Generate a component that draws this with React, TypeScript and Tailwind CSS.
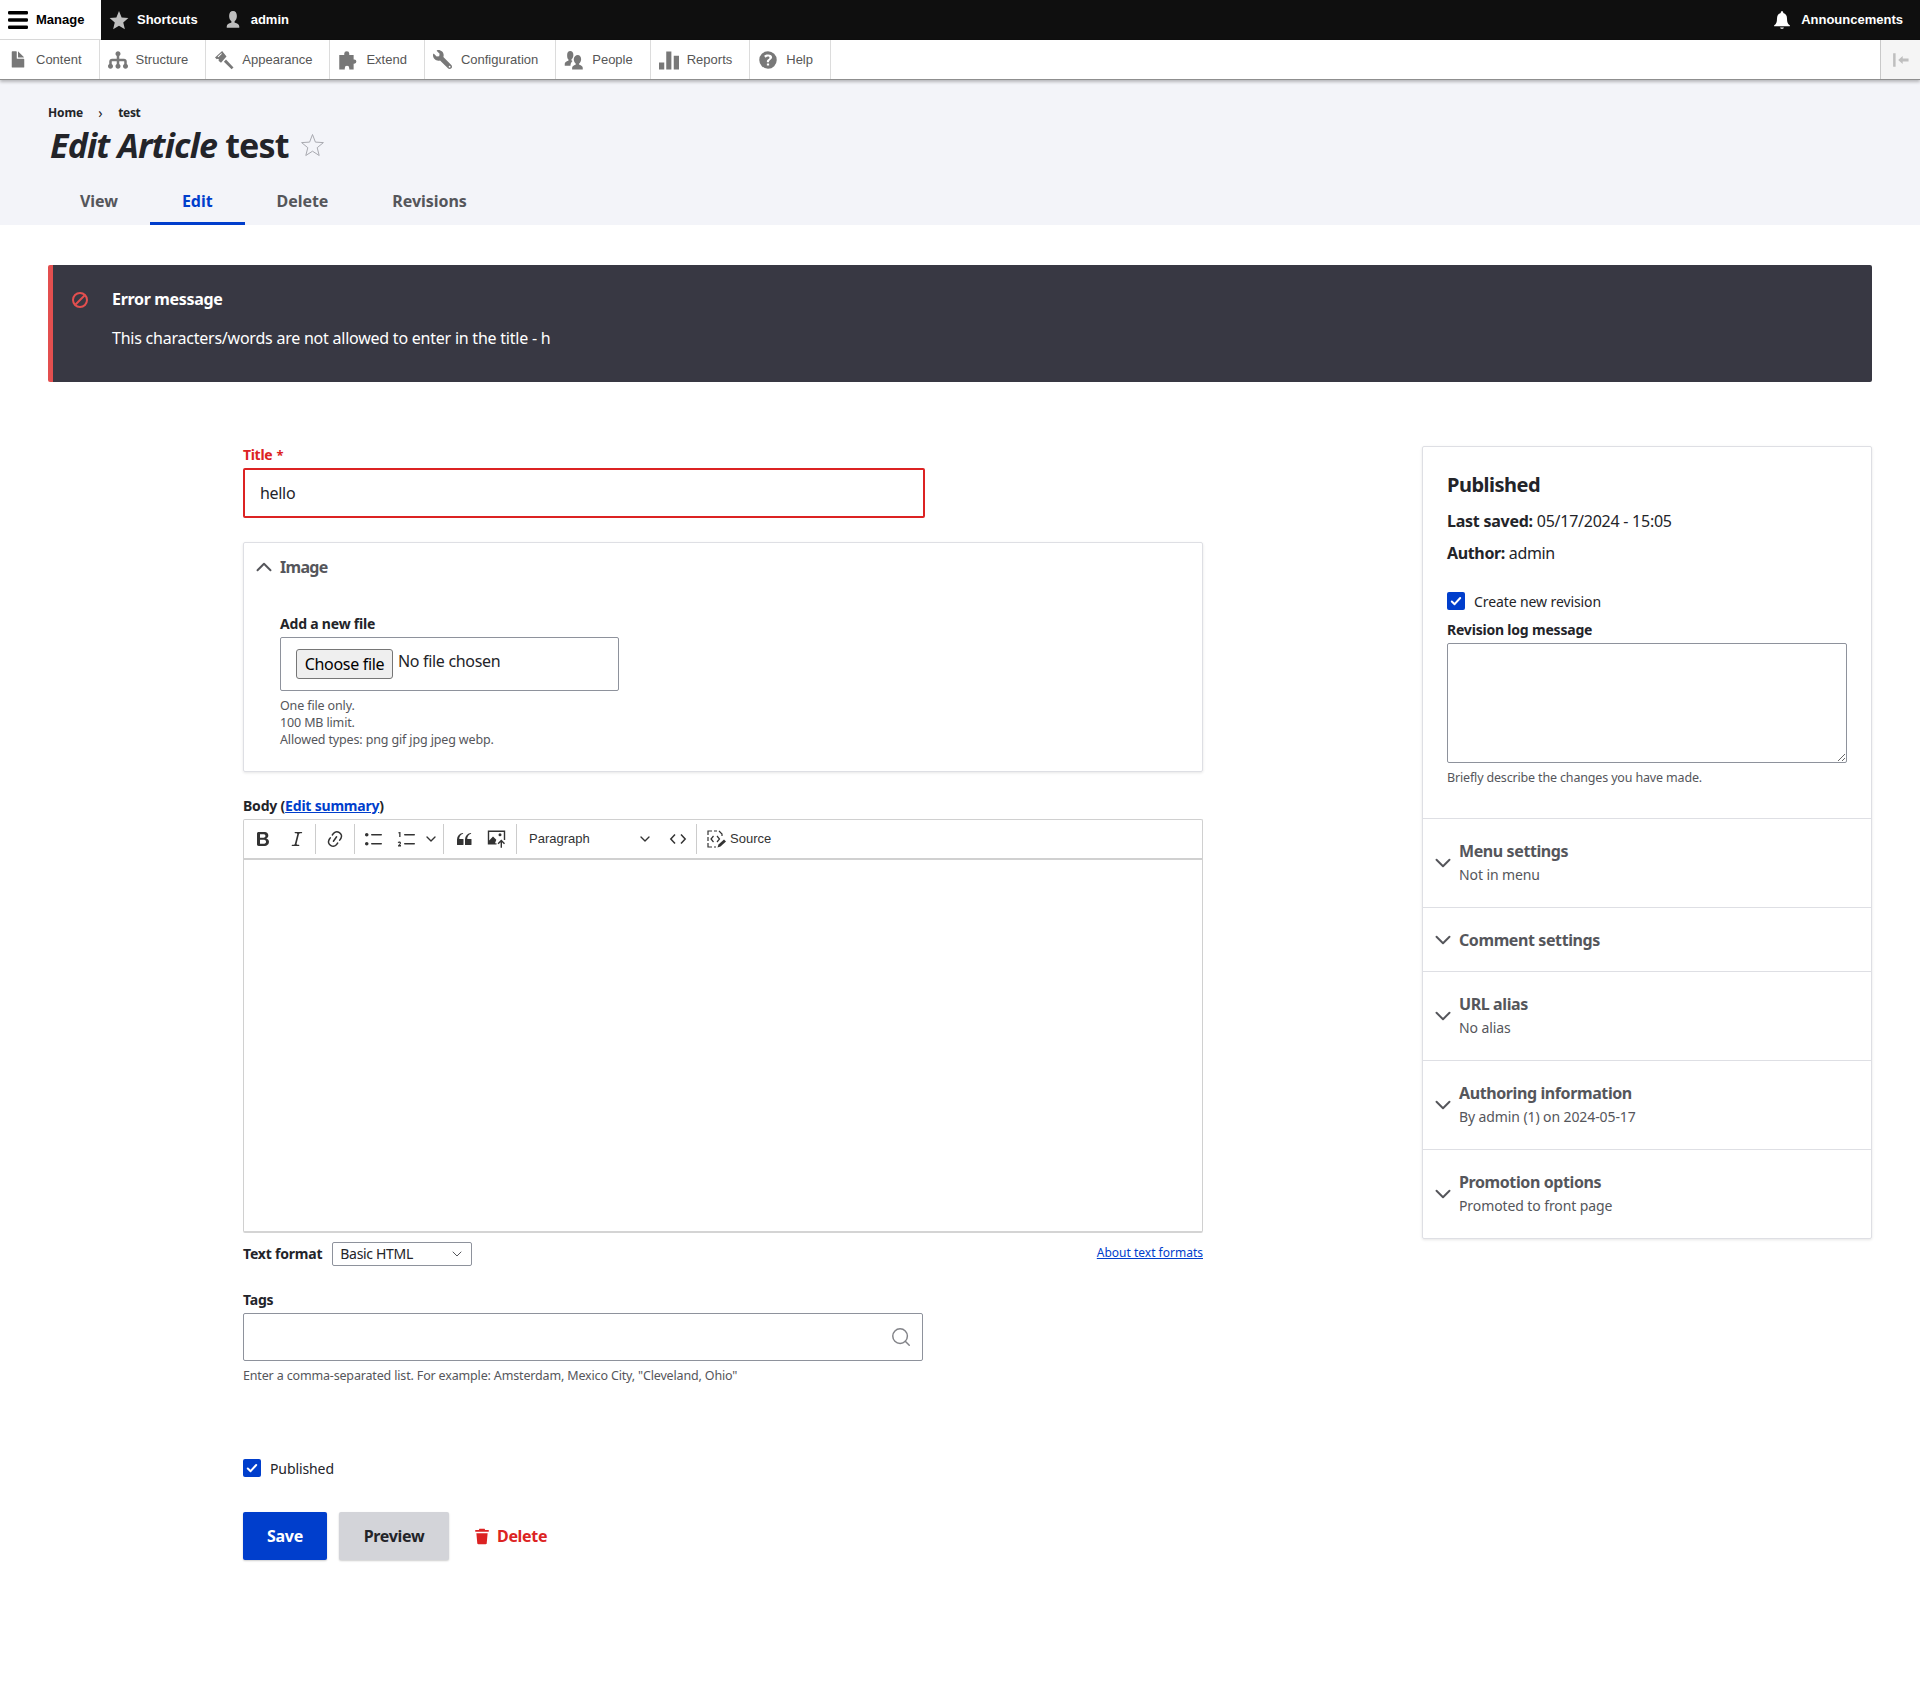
import type { ReactNode } from "react";
import { ChevronDown, ChevronUp, Search } from "lucide-react";
import { FaWrench } from "react-icons/fa";

const ICON = "#787878";

function Glyph({ d, fill = ICON, size = 20, box = "0 0 16 16" }: { d: string; fill?: string; size?: number; box?: string }) {
  return (
    <svg width={size} height={size} viewBox={box} fill={fill} fillRule="evenodd">
      <path d={d} />
    </svg>
  );
}

const paths = {
  menu: "M1 .8h14a1 1 0 0 1 1 1v.8a1 1 0 0 1-1 1H1a1 1 0 0 1-1-1v-.8a1 1 0 0 1 1-1zM1 6.600h14a1 1 0 0 1 1 1v.8a1 1 0 0 1-1 1H1a1 1 0 0 1-1-1v-.8a1 1 0 0 1 1-1zM1 12.400h14a1 1 0 0 1 1 1v.8a1 1 0 0 1-1 1H1a1 1 0 0 1-1-1v-.8a1 1 0 0 1 1-1z",
  star: "M8 .8l2.100 5.200 5.400.4-4.100 3.600 1.300 5.400L8 12.500l-4.700 2.900 1.300-5.400L.5 6.400 5.900 6z",
  user: "M8 .8c2 0 3.100 1.600 3.100 3.900 0 1.900-.8 3.400-1.700 4.200-.4.4-.3 1 .2 1.200 1.700.6 3.400 1.300 3.400 2.900v1.200H3v-1.200c0-1.600 1.700-2.300 3.400-2.900.5-.2.6-.8.2-1.200-.9-.8-1.700-2.300-1.700-4.200C4.900 2.400 6 .8 8 .8z",
  bell: "M8 1c.6 0 1 .4 1 1v.4c2 .5 3 2.100 3 4.300 0 2.900.6 4.200 2.200 5.500.3.3.1.8-.3.8H2.100c-.4 0-.6-.5-.3-.8C3.400 10.900 4 9.600 4 6.700c0-2.200 1-3.800 3-4.300V2c0-.6.4-1 1-1zM6.500 14h3c0 .6-.7 1-1.500 1s-1.500-.4-1.500-1z",
  file: "M12.502 7h-5c-.276 0-.502-.225-.502-.5v-5c0-.275-.225-.5-.5-.5h-3c-.275 0-.5.225-.5.5v12.029c0 .275.225.5.5.5h9.002c.275 0 .5-.225.5-.5v-6.029c0-.275-.225-.5-.5-.5zM8.502 6h4c.275 0 .34-.159.146-.354l-4.293-4.292c-.195-.195-.353-.129-.353.146v4c0 .275.225.5.5.5z",
  tree: "M15.002 11.277c0-.721 0-1.471 0-2.014 0-1.456-.824-2.250-2.250-2.250-1.428 0-3.500 0-3.500 0-.139 0-.25-.112-.25-.25v-2.040c.596-.346 1-.984 1-1.723 0-1.104-.895-2-2-2C6.896 1 6 1.896 6 3c0 .738.405 1.376 1 1.722v2.042c0 .138-.112.25-.25.25 0 0-2.138 0-3.500 0S1 7.932 1 9.266c0 .521 0 1.277 0 2.012-.595.353-1 .984-1 1.729 0 1.104.896 2 2 2s2-.896 2-2c0-.732-.405-1.377-1-1.729V9.266c0-.139.112-.25.25-.25h3.500c.138 0 .25.111.25.25v2.012c-.595.353-1 .984-1 1.729 0 1.104.896 2 2 2s2-.896 2-2c0-.732-.405-1.377-1-1.729V9.266c0-.139.112-.25.25-.25h3.500c.139 0 .25.111.25.25v2.012c-.596.353-1 .984-1 1.729 0 1.104.896 2 2 2s2-.896 2-2c0-.745-.404-1.384-1-1.730z",
  paint: "M6.500.8L.8 6l1.400 1.400 1-.5.8.9-.4.8 2 1.600L10 5.200zM6.400 3L3.500 5.700 2.900 5.200 5.800 2.500zM9.600 7.600l6 6.300-1.500 1.500-6.200-6.100z",
  puzzle: "M1 4h4V2.800a2 1.800 0 1 1 4 0V4h3.500v3.500h.5a1.700 1.700 0 1 1 0 3.400h-.5V15.500H9v-1a1.800 1.800 0 1 0-3.600 0v1H1z",
  people: "M5 .8c1.500 0 2.500 1.300 2.500 3.100 0 1.500-.6 2.700-1.400 3.400-.3.300-.3.700 0 1 .3.200.5.400.7.500C5.800 9.800 5.200 11 5.200 12.500H.6V11c0-1.300 1.300-1.900 2.700-2.400.4-.2.500-.7.200-1C2.700 6.800 2.500 5.600 2.500 3.900 2.500 2.100 3.500.8 5 .8zM11 4c1.600 0 2.700 1.400 2.700 3.300 0 1.500-.7 2.800-1.500 3.500-.3.300-.2.800.2 1 1.300.5 2.600 1.100 2.600 2.400V15.500H6.500V14.200c0-1.300 1.300-1.900 2.600-2.400.4-.2.500-.7.200-1-.8-.7-1.500-2-1.500-3.500C7.800 5.400 9.400 4 11 4z",
  bars: "M0 10h4.200v5.500H0zM5.800 1.200h4.100v14.300H5.800zM11.800 4.500H16v11h-4.200z",
  help: "M8 1a7 7 0 1 0 0 14A7 7 0 0 0 8 1zm.900 11.400H7.100v-1.700h1.800zM10.800 7c-.3.500-.9.900-1.300 1.200-.5.300-.7.700-.7 1.100v.4H7.100V9c0-.8.400-1.300 1-1.700.6-.4 1.100-.7 1.100-1.200s-.5-.9-1.200-.9c-.6 0-1.300.3-1.900.9l-1-1.200C4.900 4 6.100 3.500 8.200 3.500c1.900 0 3.100 1 3.100 2.300 0 .5-.2.900-.5 1.200z",
  collapse: "M1 2h2.200v12H1zM5.500 8l4-3.500v2.200h5.200v2.600H9.500v2.200z",
  trash: "M5.700 1.500h4.600l.5 1.100H14v1.700H2V2.600h3.200zM3 5.500h10l-.8 9c0 .5-.4.8-.9.8H4.700c-.5 0-.9-.3-.9-.8z",
};

const ck = {
  bold: "M10.187 17H5.773c-.637 0-1.092-.138-1.364-.415-.273-.277-.409-.718-.409-1.323V4.738c0-.617.14-1.062.419-1.332.279-.27.73-.406 1.354-.406h4.680c.69 0 1.288.041 1.793.124.506.083.96.242 1.360.478.341.197.644.447.906.75a3.262 3.262 0 0 1 .808 2.162c0 1.401-.722 2.426-2.167 3.075C15.050 10.175 16 11.315 16 13.010a3.756 3.756 0 0 1-2.296 3.504 6.100 6.100 0 0 1-1.517.377c-.571.073-1.238.11-2 .11zm-.217-6.217H7v4.087h3.069c1.977 0 2.965-.69 2.965-2.072 0-.707-.256-1.220-.768-1.537-.512-.319-1.277-.478-2.296-.478zM7 5.130v3.619h2.606c.729 0 1.292-.067 1.690-.2a1.600 1.600 0 0 0 .91-.765c.165-.267.247-.566.247-.897 0-.707-.26-1.176-.778-1.409-.519-.232-1.310-.348-2.375-.348H7z",
  italic: "m9.586 14.633.021.004c-.036.335.095.655.393.962.082.083.173.15.274.201h1.474a.6.6 0 1 1 0 1.200H5.304a.6.6 0 0 1 0-1.200h1.150c.474-.07.809-.182 1.005-.334.157-.122.291-.32.404-.597l2.416-9.550a1.053 1.053 0 0 0-.281-.823 1.120 1.120 0 0 0-.442-.296H8.150a.6.6 0 0 1 0-1.200h6.443a.6.6 0 1 1 0 1.200h-1.195c-.376.056-.65.155-.823.296-.215.175-.423.439-.623.79l-2.366 9.347z",
  link: "m11.077 15 .991-1.416a.75.75 0 1 1 1.229.86l-1.148 1.640a.748.748 0 0 1-.217.206 5.251 5.251 0 0 1-8.503-5.955.741.741 0 0 1 .12-.274l1.147-1.639a.75.75 0 1 1 1.228.86L4.933 10.700l.006.003a3.750 3.750 0 0 0 6.132 4.294l.006.004zm5.494-5.335a.748.748 0 0 1-.12.274l-1.147 1.639a.75.75 0 1 1-1.228-.86l.86-1.230a3.750 3.750 0 0 0-6.144-4.301l-.86 1.229a.75.75 0 0 1-1.229-.86l1.148-1.640a.748.748 0 0 1 .217-.206 5.251 5.251 0 0 1 8.503 5.955zm-4.563-2.532a.75.75 0 0 1 .184 1.045l-3.155 4.505a.75.75 0 1 1-1.229-.86l3.155-4.506a.75.75 0 0 1 1.045-.184z",
  bullets: "M7 5.750c0 .414.336.75.75.75h9.500a.75.75 0 1 0 0-1.500h-9.500a.75.75 0 0 0-.75.750zm-6 0C1 4.784 1.777 4 2.750 4c.966 0 1.750.777 1.750 1.750 0 .966-.777 1.750-1.750 1.750C1.784 7.500 1 6.723 1 5.750zm6 9c0 .414.336.75.75.75h9.500a.75.75 0 1 0 0-1.500h-9.500a.75.75 0 0 0-.75.750zm-6 0c0-.966.777-1.750 1.750-1.750.966 0 1.750.777 1.750 1.750 0 .966-.777 1.750-1.750 1.750-.966 0-1.750-.777-1.750-1.750z",
  numbers: "M7 5.750c0 .414.336.75.75.75h9.500a.75.75 0 1 0 0-1.500h-9.500a.75.75 0 0 0-.75.750zM3.500 3v5H2.200V4.300H1.200V3.400C2 3.300 2.300 3.200 2.600 3zM4 17.500H1v-1c1-1 1.800-1.600 1.800-2.200 0-.3-.2-.5-.6-.5-.3 0-.6.1-.9.4L.7 13c.5-.4 1-.6 1.700-.6 1 0 1.600.6 1.600 1.500 0 .8-.7 1.500-1.400 2.200H4zM7 14.750c0 .414.336.75.75.75h9.500a.75.75 0 1 0 0-1.500h-9.500a.75.75 0 0 0-.75.750z",
  quote: "M3 10.423a6.500 6.500 0 0 1 6.056-6.408l.038.67C6.448 5.423 5.354 7.663 5.220 10H9c.552 0 .5.432.5.986v4.511c0 .554-.448.503-1 .503h-5c-.552 0-.5-.449-.5-1.003v-4.574zm8 0a6.500 6.500 0 0 1 6.056-6.408l.038.67c-2.646.739-3.740 2.979-3.873 5.315H17c.552 0 .5.432.5.986v4.511c0 .554-.448.503-1 .503h-5c-.552 0-.5-.449-.5-1.003v-4.574z",
  image: "M.8 1.500h17.400v9.500h-1.400V2.900H2.200v11.300h7.300v1.400H.8zM13 4.300a1.500 1.500 0 1 1 0 3 1.500 1.500 0 0 1 0-3zM2.200 14.200v-2.700l3.800-4 3.300 3.200-1.300 3.500zM15 18.800h-1.400v-5.600l-2 2-1-1 3.700-3.700 3.700 3.700-1 1-2-2z",
};

function CkIcon({ d }: { d: string }) {
  return <Glyph d={d} fill="#333" size={20} box="0 0 20 20" />;
}

function TopItem({ icon, label, active, color = "#bebebe" }: { icon: string; label: string; active?: boolean; color?: string }) {
  return (
    <div className={active ? "box-border flex h-10 w-[101px] items-center border-b border-[#d8d8d8] bg-white pl-2 text-black" : "flex h-10 items-center pl-2 pr-[17px] text-white"}>
      <Glyph d={icon} fill={color} />
      <span className="ml-2 text-[13px] font-bold">{label}</span>
    </div>
  );
}

const adminMenu = [
  { label: "Content", icon: <Glyph d={paths.file} /> },
  { label: "Structure", icon: <Glyph d={paths.tree} /> },
  { label: "Appearance", icon: <Glyph d={paths.paint} /> },
  { label: "Extend", icon: <Glyph d={paths.puzzle} /> },
  {
    label: "Configuration",
    icon: (
      <span className="flex h-5 w-5 items-center justify-center">
        <FaWrench className="-scale-x-100" size={19} color={ICON} />
      </span>
    ),
  },
  { label: "People", icon: <Glyph d={paths.people} /> },
  { label: "Reports", icon: <Glyph d={paths.bars} /> },
  { label: "Help", icon: <Glyph d={paths.help} /> },
];

function Toolbar() {
  return (
    <div className="relative z-10 tracking-normal" style={{ fontFamily: '"Liberation Sans", Arial, sans-serif' }}>
      <div className="flex h-10 items-start bg-[#0f0f0f]">
        <TopItem icon={paths.menu} label="Manage" active color="#000" />
        <TopItem icon={paths.star} label="Shortcuts" />
        <TopItem icon={paths.user} label="admin" />
        <div className="ml-auto flex h-10 items-center pr-[17px] text-white">
          <Glyph d={paths.bell} fill="#fff" />
          <span className="ml-[9px] text-[13px] font-bold">Announcements</span>
        </div>
      </div>
      <div className="flex h-[40px] border-b border-[#8f8f8f] bg-white shadow-[0_2px_3px_rgba(0,0,0,0.25)]">
        {adminMenu.map((item) => (
          <div key={item.label} className="flex items-center border-r border-[#dcdcdc] pl-2 pr-[17px]">
            {item.icon}
            <span className="ml-2 text-[13px] text-[#565656]">{item.label}</span>
          </div>
        ))}
        <div className="ml-auto flex w-10 items-center justify-center border-l border-[#c9c9c9] bg-[#f5f5f5]">
          <Glyph d={paths.collapse} fill="#bfbfbf" size={18} />
        </div>
      </div>
    </div>
  );
}

const tabs = ["View", "Edit", "Delete", "Revisions"];

function PageHeader() {
  return (
    <div className="bg-[#f3f4f9] pl-12 pt-[25px]">
      <div className="flex h-4 items-center text-[12px] font-bold leading-4 text-[#232429]">
        <span className="tracking-[-0.1px]">Home</span>
        <span className="ml-[15px] text-[14px] font-normal">›</span>
        <span className="ml-[16px]">test</span>
      </div>
      <div className="mt-1 flex h-10 items-center pl-0.5">
        <h1 className="text-[34px] font-bold leading-10 tracking-[-0.82px] text-[#232429]">
          <em>Edit Article</em> test
        </h1>
        <svg className="ml-3" width="23" height="24" viewBox="0 0 23 24" fill="none" stroke="#a8a9b0" strokeWidth="1">
          <path d="M11.500 1.500l2.900 7.600 8 .5-6.200 5.100 2 7.800-6.700-4.300-6.700 4.300 2-7.800L.6 9.600l8-.5z" />
        </svg>
      </div>
      <div className="mt-[13px] flex">
        {tabs.map((t) => (
          <div
            key={t}
            className={
              t === "Edit"
                ? "flex h-[47px] items-center border-b-[3px] border-[#003ecc] px-8 pt-px text-[16px] font-bold tracking-[-0.05px] text-[#003ecc]"
                : "flex h-[47px] items-center border-b-[3px] border-transparent px-8 pt-px text-[16px] font-bold tracking-[-0.05px] text-[#55565b]"
            }
          >
            {t}
          </div>
        ))}
      </div>
    </div>
  );
}

function ErrorMessage() {
  return (
    <div className="mt-10 flex h-[117px] rounded-[2px] border-l-[5px] border-[#e34f4f] bg-[#383843] pl-[18px] pt-[24px] text-white">
      <svg className="mt-[2px]" width="18" height="18" viewBox="0 0 18 18" fill="none" stroke="#e34f4f" strokeWidth="2">
        <circle cx="9" cy="9" r="7" />
        <path d="M4.500 13.500l9-9" />
      </svg>
      <div className="ml-[23px]">
        <div className="h-[20px] text-[16px] font-bold leading-5">Error message</div>
        <div className="mt-[19px] text-[16px] leading-5 tracking-[-0.23px]">This characters/words are not allowed to enter in the title - h</div>
      </div>
    </div>
  );
}

function CheckRow({ label, className = "" }: { label: string; className?: string }) {
  return (
    <div className={`flex h-[18px] items-center ${className}`}>
      <span className="flex h-[18px] w-[18px] items-center justify-center rounded-[2px] bg-[#003ecc]">
        <svg width="12" height="12" viewBox="0 0 12 12" fill="none" stroke="#fff" strokeWidth="2" strokeLinecap="round" strokeLinejoin="round">
          <path d="M1.800 6.500l2.800 2.700 5.600-6.200" />
        </svg>
      </span>
      <span className="ml-[9px] mt-px text-[14px] leading-[18px] tracking-[-0.1px] text-[#232429]">{label}</span>
    </div>
  );
}

function Label({ children, className = "" }: { children: ReactNode; className?: string }) {
  return <div className={`h-[18px] text-[14px] font-bold leading-[18px] tracking-[-0.2px] text-[#232429] ${className}`}>{children}</div>;
}

function Sep() {
  return <span className="h-[30px] w-px shrink-0 bg-[#ccc]" />;
}

// widths are picked so each button centres where CKEditor puts it
function EditorBar() {
  return (
    <div className="flex h-[40px] items-center border-b-2 border-[#d0d0d0] pl-px text-[13px] tracking-normal text-[#333]" style={{ fontFamily: '"Liberation Sans", Arial, sans-serif' }}>
      <span className="flex w-[36px] justify-center"><CkIcon d={ck.bold} /></span>
      <span className="flex w-[32px] justify-center"><CkIcon d={ck.italic} /></span>
      <span className="w-[2px]" />
      <Sep />
      <span className="flex w-[38px] justify-center"><CkIcon d={ck.link} /></span>
      <Sep />
      <span className="flex w-[37px] justify-center"><CkIcon d={ck.bullets} /></span>
      <span className="ml-[5px] flex w-[20px] justify-center"><CkIcon d={ck.numbers} /></span>
      <span className="ml-[6px] flex w-[16px] justify-center"><ChevronDown size={16} strokeWidth={2} /></span>
      <span className="w-[4px]" />
      <Sep />
      <span className="flex w-[39px] justify-center"><CkIcon d={ck.quote} /></span>
      <span className="flex w-[28px] justify-center"><CkIcon d={ck.image} /></span>
      <span className="w-[5px]" />
      <Sep />
      <span className="ml-[12px] w-[108px]">Paragraph</span>
      <ChevronDown size={16} strokeWidth={2} />
      <span className="ml-[7px] flex w-[36px] justify-center">
        <svg width="20" height="20" viewBox="0 0 20 20" fill="none" stroke="#333" strokeWidth="1.500">
          <path d="M7 5.500L2.800 10 7 14.500M13 5.500l4.200 4.500-4.200 4.500" />
        </svg>
      </span>
      <Sep />
      <svg className="ml-[9px]" width="20" height="20" viewBox="0 0 20 20" fill="none" stroke="#333" strokeWidth="1.200">
        <path d="M2 6V2h4M8 2h3M13 2l3 3v2M2 8v4M2 14v4h4M8 18h2" />
        <path d="M7.500 7L5 10l2.500 3M11 7l2.500 3L11 13" />
        <path d="M11.500 18.500l1-3 5.500-5 2 2-5.500 5z" fill="#333" stroke="none" />
      </svg>
      <span className="ml-[4px]">Source</span>
    </div>
  );
}

function Form() {
  return (
    <div className="ml-[195px] w-[960px]">
      <div className="h-[18px] text-[14px] font-bold leading-[18px] text-[#dc2323]">
        Title <span className="ml-px text-[13px]">*</span>
      </div>
      <input
        readOnly
        value="hello"
        className="mt-1 block h-[50px] w-[682px] rounded-[2px] border-2 border-[#dc2323] px-[15px] text-[16px] text-[#232429] outline-none"
      />

      <div className="mt-6 h-[230px] rounded-[2px] border border-[#dedfe4] shadow-[0_1px_3px_rgba(0,0,0,0.1)]">
        <div className="flex h-[47px] items-center pl-[7px] text-[#55565b]">
          <ChevronUp size={26} strokeWidth={1.800} />
          <span className="ml-[3px] text-[16px] font-bold tracking-[-0.7px]">Image</span>
        </div>
        <div className="mt-[25px] pl-9">
          <Label>Add a new file</Label>
          <div className="mt-1 flex h-[54px] w-[339px] items-start rounded-[2px] border border-[#8e929c] pl-[15px] pt-[11px] text-[16px] text-[#232429]">
            <button className="h-[30px] w-[97px] rounded-[3px] border border-[#767676] bg-[#efefef] text-black">Choose file</button>
            <span className="ml-[5px] leading-6">No file chosen</span>
          </div>
          <div className="mt-[6px] text-[12.500px] leading-[17px] tracking-[-0.14px] text-[#55565b]">
            <div>One file only.</div>
            <div>100 MB limit.</div>
            <div>Allowed types: png gif jpg jpeg webp.</div>
          </div>
        </div>
      </div>

      <Label className="mt-[25px]">
        Body (<span className="text-[#003ecc] underline">Edit summary</span>)
      </Label>
      <div className="mt-1 h-[414px] rounded-[2px] border border-[#d0d0d0] border-b-2 border-b-[#d4d4d4]">
        <EditorBar />
      </div>

      <div className="mt-[9px] flex h-6 items-center">
        <Label>Text format</Label>
        <div className="relative ml-[10px] flex h-6 w-[140px] items-center rounded-[2px] border border-[#8e929c] pb-[2px] pl-[7px] text-[14px] text-[#232429]">
          Basic HTML
          <ChevronDown className="absolute right-[6px] top-[3px]" size={16} strokeWidth={1.500} color="#55565b" />
        </div>
        <span className="-mt-[3px] ml-auto text-[12px] tracking-normal text-[#003ecc] underline">About text formats</span>
      </div>

      <Label className="mt-[25px]">Tags</Label>
      <div className="mt-1 flex h-[48px] w-[680px] items-center justify-end rounded-[2px] border border-[#8e929c] pr-[10px]">
        <Search size={22} strokeWidth={1.600} color="#828388" />
      </div>
      <div className="mt-[7px] h-4 text-[12.500px] leading-4 tracking-[-0.16px] text-[#55565b]">
        Enter a comma-separated list. For example: Amsterdam, Mexico City, "Cleveland, Ohio"
      </div>

      <CheckRow label="Published" className="mt-[75px]" />

      <div className="mt-[35px] flex items-center">
        <button className="h-12 w-[84px] rounded-[2px] bg-[#003ecc] text-[16px] font-bold text-white shadow-[0_1px_2px_rgba(0,0,0,0.2)]">Save</button>
        <button className="ml-3 h-12 w-[110px] rounded-[2px] bg-[#d3d4d9] text-[16px] font-bold text-[#232429] shadow-[0_1px_2px_rgba(0,0,0,0.2)]">Preview</button>
        <span className="ml-6 flex items-center text-[16px] font-bold text-[#dc2323]">
          <Glyph d={paths.trash} fill="#dc2323" size={18} />
          <span className="ml-[6px]">Delete</span>
        </span>
      </div>
    </div>
  );
}

const sections = [
  { title: "Menu settings", sub: "Not in menu", h: "h-[89px]" },
  { title: "Comment settings", sub: "", h: "h-[64px]" },
  { title: "URL alias", sub: "No alias", h: "h-[89px]" },
  { title: "Authoring information", sub: "By admin (1) on 2024-05-17", h: "h-[89px]" },
  { title: "Promotion options", sub: "Promoted to front page", h: "h-[89px]" },
];

function Sidebar() {
  return (
    <div className="ml-auto h-[793px] w-[450px] rounded-[2px] border border-[#dedfe4] shadow-[0_1px_3px_rgba(0,0,0,0.1)]">
      <div className="h-[371px] px-6 pt-[24px]">
        <div className="text-[20px] font-bold leading-7 tracking-[-0.5px] text-[#232429]">Published</div>
        <div className="mt-[10px] text-[16px] leading-6 tracking-[-0.25px] text-[#232429]">
          <b>Last saved:</b> 05/17/2024 - 15:05
        </div>
        <div className="mt-2 text-[16px] leading-6 tracking-[-0.35px] text-[#232429]">
          <b>Author:</b> admin
        </div>
        <CheckRow label="Create new revision" className="mt-[27px]" />
        <Label className="mt-[11px]">Revision log message</Label>
        <textarea readOnly className="mt-1 block h-[120px] w-[400px] rounded-[2px] border border-[#8e929c]" />
        <div className="mt-[7px] text-[12.500px] leading-4 tracking-[-0.16px] text-[#55565b]">Briefly describe the changes you have made.</div>
      </div>
      {sections.map((s) => (
        <div key={s.title} className={`flex items-center border-t border-[#dedfe4] pl-[7px] ${s.h}`}>
          <ChevronDown size={26} strokeWidth={1.800} color="#55565b" />
          <div className="ml-[3px]">
            <div className="text-[16px] font-bold leading-6 tracking-[-0.4px] text-[#55565b]">{s.title}</div>
            {s.sub && <div className="text-[14px] leading-6 tracking-[-0.1px] text-[#55565b]">{s.sub}</div>}
          </div>
        </div>
      ))}
    </div>
  );
}

export default function App() {
  return (
    <div className="min-h-[1682px] bg-white tracking-[-0.02em]" style={{ fontFamily: '"Noto Sans", sans-serif' }}>
      <Toolbar />
      <PageHeader />
      <div className="px-12">
        <ErrorMessage />
        <div className="mt-[64px] flex">
          <Form />
          <Sidebar />
        </div>
      </div>
    </div>
  );
}
